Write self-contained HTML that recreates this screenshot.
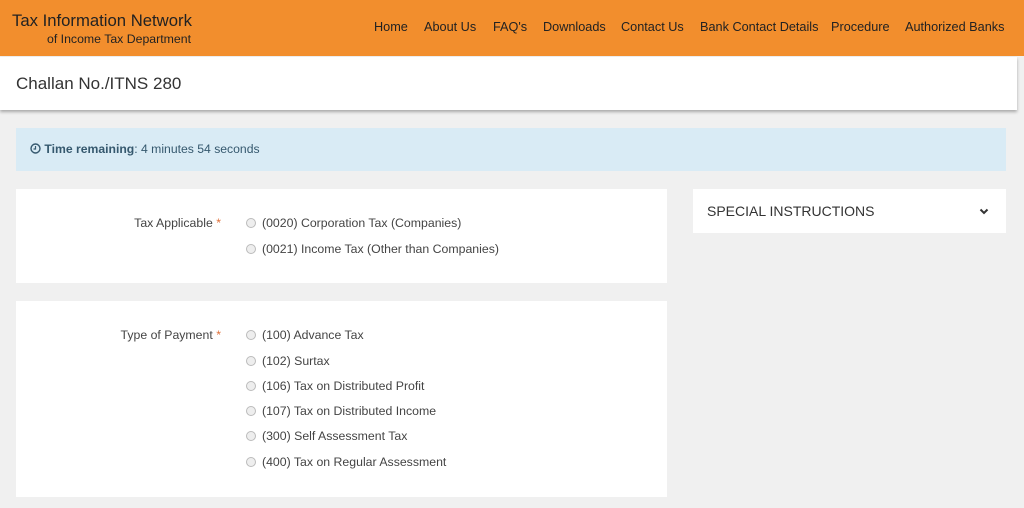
<!DOCTYPE html>
<html><head><style>
*{margin:0;padding:0;box-sizing:border-box}
body{width:1024px;height:508px;overflow:hidden;background:#f0f0f0;font-family:"Liberation Sans",sans-serif;position:relative;color:#333}
.hdr{position:absolute;left:0;top:0;width:1024px;height:56px;background:#f28e2d}
.t1{position:absolute;left:12px;top:11px;font-size:16.7px;color:#222}
.t2{position:absolute;left:47px;top:32px;font-size:12.3px;color:#222}
.nav{position:absolute;top:20px;font-size:12.7px;color:#222}
.bar{position:absolute;left:0;top:57px;width:1017px;height:53px;background:#fff;box-shadow:0 2px 3px rgba(0,0,0,.3)}
.bar span{position:absolute;left:16px;top:17px;font-size:17px;color:#333}
.alert{position:absolute;left:16px;top:128px;width:990px;height:43px;background:#d9ebf5;font-size:12.2px;color:#35586e;padding:14px 0 0 14px}
.pan{position:absolute;background:#fff}
.lbl{position:absolute;font-size:12.3px;color:#444;text-align:right}
.lbl b{color:#e0703a;font-weight:normal}
.opt{position:absolute;font-size:12.3px;color:#444}
.opt i{display:inline-block;width:10px;height:10px;border:1px solid #bbb;border-radius:50%;background:#eee;margin-right:6px;vertical-align:-1px}
</style></head><body>
<div class="hdr">
<div class="t1">Tax Information Network</div>
<div class="t2">of Income Tax Department</div>
<span class="nav" style="left:374px">Home</span>
<span class="nav" style="left:424px">About Us</span>
<span class="nav" style="left:493px">FAQ's</span>
<span class="nav" style="left:543px">Downloads</span>
<span class="nav" style="left:621px">Contact Us</span>
<span class="nav" style="left:700px">Bank Contact Details</span>
<span class="nav" style="left:831px">Procedure</span>
<span class="nav" style="left:905px">Authorized Banks</span>
</div>
<div class="bar"><span>Challan No./ITNS 280</span></div>
<div class="alert"><svg width="11" height="11" viewBox="0 0 11 11" style="vertical-align:-1px"><circle cx="5.5" cy="5.5" r="4.5" stroke="#35586e" stroke-width="1.4" fill="none"/><path d="M5.5 3v3H3.5" stroke="#35586e" stroke-width="1.2" fill="none"/></svg> <b>Time remaining</b>: 4 minutes 54 seconds</div>
<div class="pan" style="left:16px;top:189px;width:651px;height:94px">
<div class="lbl" style="right:446px;top:27px">Tax Applicable <b>*</b></div>
<div class="opt" style="left:230px;top:27px"><i></i>(0020) Corporation Tax (Companies)</div>
<div class="opt" style="left:230px;top:53px"><i></i>(0021) Income Tax (Other than Companies)</div>
</div>
<div class="pan" style="left:16px;top:301px;width:651px;height:196px">
<div class="lbl" style="right:446px;top:27px">Type of Payment <b>*</b></div>
<div class="opt" style="left:230px;top:27px"><i></i>(100) Advance Tax</div>
<div class="opt" style="left:230px;top:53px"><i></i>(102) Surtax</div>
<div class="opt" style="left:230px;top:78px"><i></i>(106) Tax on Distributed Profit</div>
<div class="opt" style="left:230px;top:103px"><i></i>(107) Tax on Distributed Income</div>
<div class="opt" style="left:230px;top:128px"><i></i>(300) Self Assessment Tax</div>
<div class="opt" style="left:230px;top:154px"><i></i>(400) Tax on Regular Assessment</div>
</div>
<div class="pan" style="left:693px;top:189px;width:313px;height:44px">
<span style="position:absolute;left:14px;top:14px;font-size:14px;color:#333">SPECIAL INSTRUCTIONS</span>
<svg style="position:absolute;left:286px;top:19px" width="10" height="7" viewBox="0 0 10 7"><path d="M1.5 1.5L5 5L8.5 1.5" stroke="#333" stroke-width="2" fill="none"/></svg>
</div>
</body></html>
